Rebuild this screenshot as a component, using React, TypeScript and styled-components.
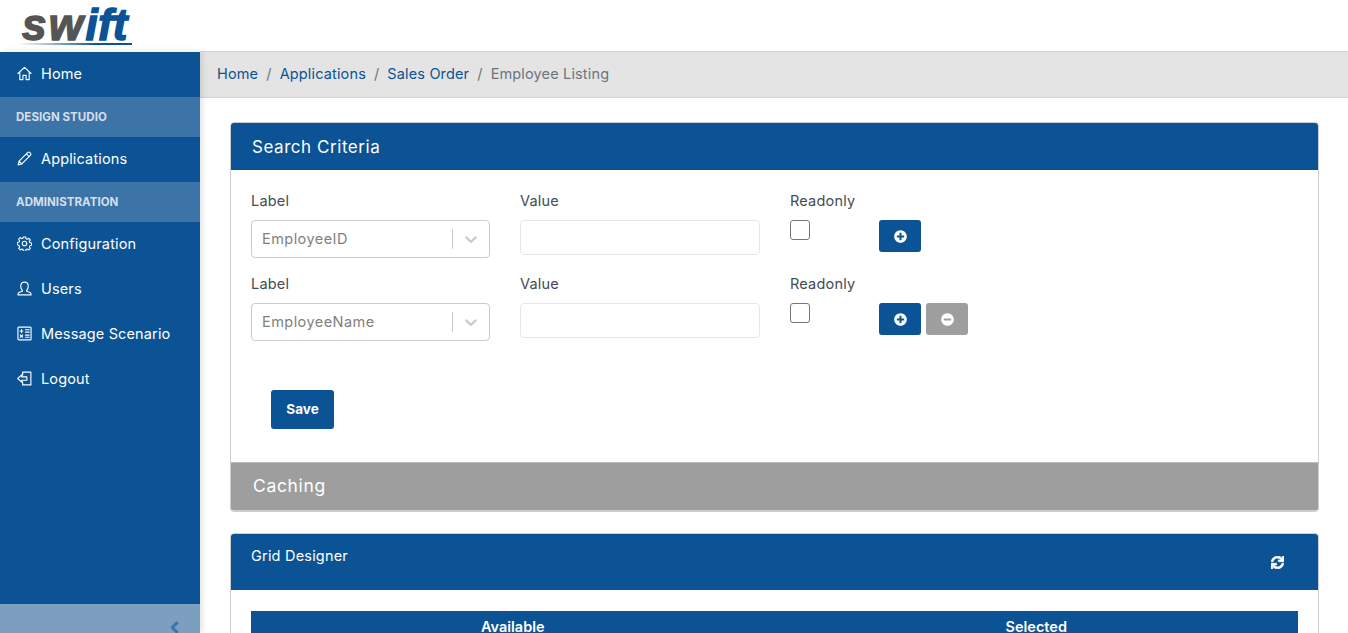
import React, { FC, ReactNode } from 'react';
import styled, { createGlobalStyle } from 'styled-components';
import { FaChevronLeft, FaMinusCircle, FaPlusCircle, FaSync } from 'react-icons/fa';

const BLUE = '#0b5394';
const GREY = '#9e9e9e';

const GlobalStyle = createGlobalStyle`
  html, body {
    margin: 0;
    height: 100%;
    overflow: hidden;
    background: #ffffff;
  }
  body {
    font-family: Inter, 'Open Sans', 'Liberation Sans', sans-serif;
    color: #444c55;
  }
  * {
    box-sizing: border-box;
  }
`;

const Page = styled.div`
  display: flex;
  flex-direction: column;
  width: 1348px;
  height: 633px;
  overflow: hidden;
`;

const Header = styled.header`
  flex: none;
  height: 52px;
  padding: 0 0 0 22px;
  background: #ffffff;
`;

const Logo = styled.div`
  position: relative;
  width: 110px;
  font-family: 'Liberation Sans', Arial, sans-serif;
  font-size: 44px;
  font-style: italic;
  font-weight: 700;
  line-height: normal;
  letter-spacing: 2.4px;
  color: #555555;
  -webkit-text-stroke: 1.4px currentColor;
  span {
    color: ${BLUE};
    letter-spacing: 0.2px;
  }
  &::after {
    content: '';
    position: absolute;
    left: -4px;
    right: 0;
    top: 43px;
    height: 2px;
    background: linear-gradient(to right, rgba(11, 83, 148, 0), ${BLUE} 70%);
  }
`;

const Body = styled.div`
  flex: 1;
  display: flex;
  min-height: 0;
`;

const Sidebar = styled.nav`
  flex: none;
  display: flex;
  flex-direction: column;
  width: 200px;
  background: ${BLUE};
  box-shadow: 2px 0 6px rgba(0, 0, 0, 0.12);
  position: relative;
  z-index: 1;
`;

const NavItem = styled.div`
  display: flex;
  align-items: center;
  gap: 9px;
  height: 45px;
  padding: 0 0 2px 17px;
  color: #ffffff;
  font-size: 14.5px;
  letter-spacing: 0.15px;
  svg {
    flex: none;
    width: 15px;
    height: 15px;
  }
`;

const NavSection = styled.div`
  display: flex;
  align-items: center;
  height: 40px;
  padding-left: 16px;
  background: #3d74a8;
  color: #d5dfea;
  font-size: 11.5px;
  font-weight: 700;
  letter-spacing: 0.05px;
`;

const SidebarFooter = styled.div`
  flex: none;
  display: flex;
  justify-content: flex-end;
  height: 29px;
  margin-top: auto;
  padding: 17px 19px 0 0;
  overflow: hidden;
  background: #7c9fc0;
  color: #3d74a8;
  font-size: 13px;
  line-height: 1;
  svg {
    stroke: currentColor;
    stroke-width: 40;
  }
`;

const Main = styled.main`
  flex: 1;
  min-width: 0;
`;

const Breadcrumb = styled.div`
  display: flex;
  align-items: center;
  height: 46px;
  padding: 0 0 2px 17px;
  background: #e4e4e4;
  box-shadow: 0 -1px 0 #d2d2d2;
  border-bottom: 1px solid #d2d2d2;
  font-size: 14.5px;
  letter-spacing: 0.15px;
`;

const Crumb = styled.span<{ $current?: boolean }>`
  color: ${(p) => (p.$current ? '#6c757d' : BLUE)};
`;

const CrumbSlash = styled.span`
  margin: 0 8px;
  color: #6c757d;
`;

const Content = styled.div`
  display: flex;
  flex-direction: column;
  gap: 21px;
  padding: 24px 29px 0 30px;
`;

const Card = styled.section`
  border: 1px solid #c8ced3;
  border-radius: 4px;
  background: #ffffff;
  overflow: hidden;
`;

const CardTitle = styled.div`
  display: flex;
  align-items: center;
  height: 47px;
  padding-left: 21px;
  background: ${BLUE};
  color: #ffffff;
  font-size: 17px;
  letter-spacing: 0.55px;
`;

const CardBody = styled.div`
  padding: 21px 20px 33px;
`;

const FormRow = styled.div`
  display: grid;
  grid-template-columns: 239px 240px 59px auto;
  column-gap: 30px;
  margin-bottom: 16px;
`;

const Field = styled.div`
  display: flex;
  flex-direction: column;
`;

const Label = styled.label`
  height: 20px;
  margin-bottom: 9px;
  font-size: 14.5px;
  line-height: 20px;
  letter-spacing: 0.2px;
`;

const SelectBox = styled.div`
  display: flex;
  align-items: center;
  height: 38px;
  border: 1px solid #cccccc;
  border-radius: 4px;
  padding-left: 10px;
  color: #808080;
  font-size: 14.5px;
  letter-spacing: 0.45px;
`;

const SelectValue = styled.span`
  flex: 1;
  padding-bottom: 2px;
`;

const SelectDivider = styled.span`
  width: 1px;
  height: 20px;
  background: #cccccc;
`;

const Chevron = styled.svg`
  width: 20px;
  height: 20px;
  margin: 0 8px;
  fill: #cccccc;
`;

const TextBox = styled.input`
  height: 35px;
  border: 1px solid #e4e7ea;
  border-radius: 4px;
  background: #ffffff;
`;

const CheckBox = styled.span`
  display: block;
  width: 20px;
  height: 20px;
  border: 1px solid #767676;
  border-radius: 3px;
  background: #ffffff;
`;

const ButtonGroup = styled.div`
  display: flex;
  gap: 5px;
  padding-top: 29px;
`;

const IconButton = styled.button<{ $grey?: boolean }>`
  display: flex;
  align-items: center;
  justify-content: center;
  width: 42px;
  height: 32px;
  padding: 0;
  border: 0;
  border-radius: 3px;
  background: ${(p) => (p.$grey ? GREY : BLUE)};
  color: #ffffff;
  font-size: 13px;
`;

const SaveButton = styled.button`
  display: block;
  width: 63px;
  height: 39px;
  margin: 49px 0 0 20px;
  padding: 0 0 1px;
  border: 0;
  border-radius: 3px;
  background: ${BLUE};
  color: #ffffff;
  font-family: inherit;
  font-size: 13.5px;
  font-weight: 700;
`;

const CachingBar = styled.div`
  display: flex;
  align-items: center;
  height: 48px;
  padding: 0 0 2px 22px;
  background: ${GREY};
  border-top: 1px solid #bdbdbd;
  color: #ffffff;
  font-size: 17.5px;
  letter-spacing: 0.65px;
`;

const CachingEnd = styled.div`
  height: 1px;
  background: #c8ced3;
`;

const GridHeader = styled.div`
  display: flex;
  justify-content: space-between;
  height: 56px;
  padding: 13px 34px 0 20px;
  background: ${BLUE};
  color: #ffffff;
  font-size: 14.5px;
  line-height: 18px;
  letter-spacing: 0.2px;
  svg {
    margin-top: 9px;
    font-size: 13px;
    stroke: currentColor;
    stroke-width: 30;
  }
`;

const GridBody = styled.div`
  padding: 21px 20px;
`;

const ListHead = styled.div`
  display: grid;
  grid-template-columns: 1fr 1fr;
  height: 33px;
  padding-top: 7px;
  background: ${BLUE};
  color: #ffffff;
  font-size: 14.5px;
  font-weight: 600;
  line-height: 18px;
  text-align: center;
`;

const Outline = styled.svg`
  fill: none;
  stroke: currentColor;
  stroke-width: 1.2;
  stroke-linecap: round;
  stroke-linejoin: round;
`;

const icon = (children: ReactNode) => <Outline viewBox='0 0 16 16'>{children}</Outline>;

const HomeIcon = () =>
  icon(<path d='M1 8 8 1.5 15 8M3 6.5V14.5H6.3V10H9.7V14.5H13V6.5' />);

const PencilIcon = () =>
  icon(<path d='M1.2 14.8 2.2 10.8 11.5 1.5Q12.5.8 13.5 1.5L14.5 2.5Q15.2 3.5 14.5 4.5L5.2 13.8ZM2.2 10.8 5.2 13.8M10 3 13 6' />);

const GearIcon = () =>
  icon(
    <>
      <circle cx='8' cy='8' r='2.4' />
      <path d='M6.8 1h2.4l.4 1.9 1.3.6 1.7-1 1.6 1.6-1 1.7.6 1.3 1.9.4v2.4l-1.9.4-.6 1.3 1 1.7-1.6 1.6-1.7-1-1.3.6-.4 1.9H6.8l-.4-1.9-1.3-.6-1.7 1-1.6-1.6 1-1.7-.6-1.3L.3 9.2V6.8l1.9-.4.6-1.3-1-1.7 1.6-1.6 1.7 1 1.3-.6Z' />
    </>,
  );

const UserIcon = () =>
  icon(<path d='M5.8 10.2C4.6 9 4 7.4 4 5.5 4 3 5.6 1.2 8 1.2S12 3 12 5.5C12 7.4 11.4 9 10.2 10.2V11L14 12.3C14.8 12.7 15 13.4 15 14.8H1C1 13.4 1.2 12.7 2 12.3L5.8 11Z' />);

const CalcIcon = () =>
  icon(
    <>
      <rect x='1' y='1.2' width='14' height='13.6' rx='1' />
      <path d='M3.3 5.3H6.3M4.8 3.8V6.8M9 4H13M9 6.5H13M3.5 9.5 6 12M6 9.5 3.5 12M9 9.7H13M9 12H13' />
    </>,
  );

const LogoutIcon = () =>
  icon(<path d='M6 4.5V1.2H14.8V14.8H6V11.5M.8 8 5 4.2V6.2H10.5V9.8H5V11.8Z' />);

const SelectChevron = () => (
  <Chevron viewBox='0 0 20 20'>
    <path d='M4.516 7.548c0.436-0.446 1.043-0.481 1.576 0l3.908 3.747 3.908-3.747c0.533-0.481 1.141-0.446 1.576 0 0.436 0.445 0.408 1.197 0 1.615-0.406 0.418-4.695 4.502-4.695 4.502-0.217 0.223-0.502 0.335-0.789 0.335s-0.572-0.112-0.79-0.335c0 0-4.287-4.084-4.695-4.502s-0.436-1.17 0-1.615z' />
  </Chevron>
);

type CriteriaRowProps = {
  value: string;
  removable?: boolean;
};

const CriteriaRow: FC<CriteriaRowProps> = ({ value, removable }) => (
  <FormRow>
    <Field>
      <Label>Label</Label>
      <SelectBox>
        <SelectValue>{value}</SelectValue>
        <SelectDivider />
        <SelectChevron />
      </SelectBox>
    </Field>
    <Field>
      <Label>Value</Label>
      <TextBox />
    </Field>
    <Field>
      <Label>Readonly</Label>
      <CheckBox />
    </Field>
    <ButtonGroup>
      <IconButton>
        <FaPlusCircle />
      </IconButton>
      {removable && (
        <IconButton $grey>
          <FaMinusCircle />
        </IconButton>
      )}
    </ButtonGroup>
  </FormRow>
);

const crumbs = ['Home', 'Applications', 'Sales Order'];

export default function App() {
  return (
    <>
      <GlobalStyle />
      <Page>
        <Header>
          <Logo>
            sw<span>ift</span>
          </Logo>
        </Header>
        <Body>
          <Sidebar>
            <NavItem>
              <HomeIcon />
              Home
            </NavItem>
            <NavSection>DESIGN STUDIO</NavSection>
            <NavItem>
              <PencilIcon />
              Applications
            </NavItem>
            <NavSection>ADMINISTRATION</NavSection>
            <NavItem>
              <GearIcon />
              Configuration
            </NavItem>
            <NavItem>
              <UserIcon />
              Users
            </NavItem>
            <NavItem>
              <CalcIcon />
              Message Scenario
            </NavItem>
            <NavItem>
              <LogoutIcon />
              Logout
            </NavItem>
            <SidebarFooter>
              <FaChevronLeft />
            </SidebarFooter>
          </Sidebar>
          <Main>
            <Breadcrumb>
              {crumbs.map((c) => (
                <React.Fragment key={c}>
                  <Crumb>{c}</Crumb>
                  <CrumbSlash>/</CrumbSlash>
                </React.Fragment>
              ))}
              <Crumb $current>Employee Listing</Crumb>
            </Breadcrumb>
            <Content>
              <Card>
                <CardTitle>Search Criteria</CardTitle>
                <CardBody>
                  <CriteriaRow value='EmployeeID' />
                  <CriteriaRow value='EmployeeName' removable />
                  <SaveButton>Save</SaveButton>
                </CardBody>
                <CachingBar>Caching</CachingBar>
                <CachingEnd />
              </Card>
              <Card>
                <GridHeader>
                  Grid Designer
                  <FaSync />
                </GridHeader>
                <GridBody>
                  <ListHead>
                    <span>Available</span>
                    <span>Selected</span>
                  </ListHead>
                </GridBody>
              </Card>
            </Content>
          </Main>
        </Body>
      </Page>
    </>
  );
}
